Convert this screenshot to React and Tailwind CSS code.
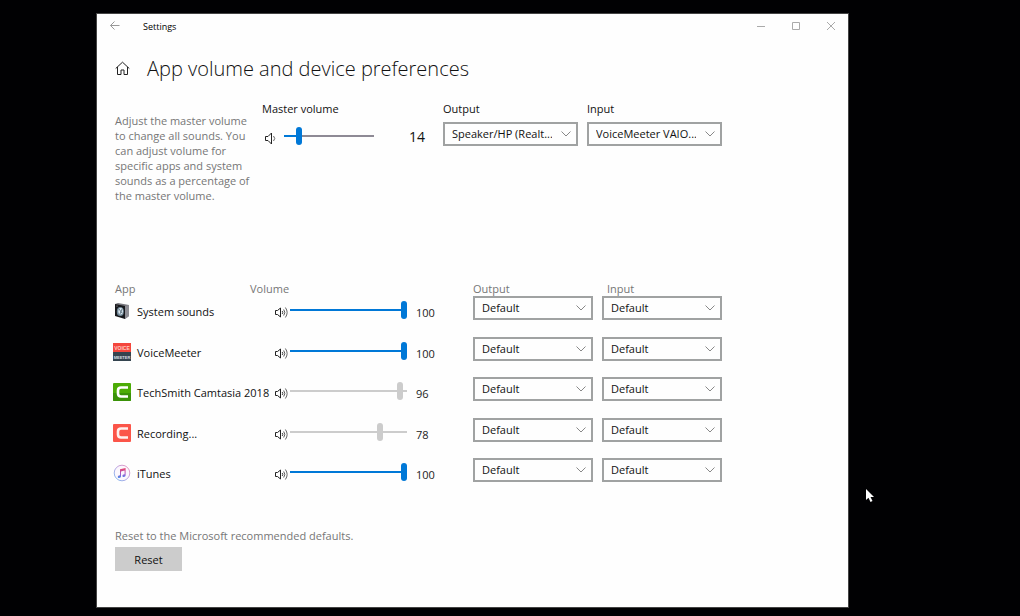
import { useState } from 'react'
import clsx from 'clsx'

const apps = [
  { id: 'system', name: 'System sounds', icon: SystemSoundsIcon, volume: 100, active: true },
  { id: 'voicemeeter', name: 'VoiceMeeter', icon: VoiceMeeterIcon, volume: 100, active: true },
  { id: 'camtasia', name: 'TechSmith Camtasia 2018', icon: CamtasiaIcon, volume: 96, active: false },
  { id: 'recording', name: 'Recording...', icon: RecordingIcon, volume: 78, active: false },
  { id: 'itunes', name: 'iTunes', icon: ITunesIcon, volume: 100, active: true },
]

function SystemSoundsIcon() {
  return (
    <svg width="18" height="18" viewBox="0 0 18 18" aria-hidden="true">
      <path d="M2 2 5 1l11 2v11l-4 3z" fill="#77777d" />
      <path d="m12 4 4-1v11l-4 3z" fill="#8d8d94" />
      <path d="m2 2 10 2v13L2 14z" fill="#17181c" />
      <ellipse cx="7.3" cy="9.5" rx="3.5" ry="4.6" fill="#6f8797" />
      <ellipse cx="7.6" cy="9.2" rx="2.3" ry="3.3" fill="#dce6ee" />
      <path d="m6 7 3 4M9 7l-2 5" stroke="#4e6472" strokeWidth="0.8" />
      <circle cx="4" cy="4" r="0.6" fill="#aaa" />
    </svg>
  )
}

function VoiceMeeterIcon() {
  return (
    <svg width="18" height="18" viewBox="0 0 18 18" aria-hidden="true">
      <path d="M0 0h18v9H0z" fill="#f4463c" />
      <path d="M0 9h18v9H0z" fill="#34444f" />
      <text x="9" y="6.5" textAnchor="middle" fontSize="5" fontWeight="700" fill="#ffc9c0" fontFamily="Liberation Sans, sans-serif">VOICE</text>
      <text x="9" y="15.5" textAnchor="middle" fontSize="4" fontWeight="700" fill="#d5dde2" fontFamily="Liberation Sans, sans-serif">MEETER</text>
    </svg>
  )
}

function CamtasiaIcon() {
  return (
    <svg width="18" height="18" viewBox="0 0 18 18" aria-hidden="true">
      <rect width="18" height="18" rx="1" fill="#4cab06" />
      <path d="M0 10h18v7a1 1 0 0 1-1 1H1a1 1 0 0 1-1-1z" fill="#3a9208" />
      <path d="M15 4.500H8Q5 4.500 5 7.500v3q0 3 3 3h7" fill="none" stroke="#fff" strokeWidth="2.6" />
    </svg>
  )
}

function RecordingIcon() {
  return (
    <svg width="18" height="18" viewBox="0 0 18 18" aria-hidden="true">
      <rect width="18" height="18" rx="1" fill="#fb5549" />
      <path d="M15 4.500H8Q5 4.500 5 7.500v3q0 3 3 3h7" fill="none" stroke="#fff0ed" strokeWidth="2.6" />
    </svg>
  )
}

function ITunesIcon() {
  return (
    <svg width="18" height="18" viewBox="0 0 18 18" aria-hidden="true">
      <defs>
        <linearGradient id="itunes-ring" x1="0" y1="1" x2="1" y2="0">
          <stop offset="0" stopColor="#6fb7ee" />
          <stop offset="0.5" stopColor="#b29be0" />
          <stop offset="1" stopColor="#ee8cb4" />
        </linearGradient>
        <linearGradient id="itunes-note" x1="0" y1="0" x2="0" y2="1">
          <stop offset="0" stopColor="#ee4468" />
          <stop offset="0.6" stopColor="#a558cf" />
          <stop offset="1" stopColor="#3f8fe8" />
        </linearGradient>
      </defs>
      <circle cx="9" cy="9" r="7.8" fill="#fbf7fd" stroke="url(#itunes-ring)" strokeWidth="0.9" />
      <path
        d="M7 5.2 12.6 4v7.3c0 1-.8 1.7-1.8 1.7s-1.4-.6-1.4-1.3c0-.8.7-1.3 2.2-1.5V6.6L8 7.4v4.9c0 1-.8 1.7-1.8 1.7s-1.4-.6-1.4-1.3c0-.8.7-1.3 2.2-1.5z"
        fill="url(#itunes-note)"
      />
    </svg>
  )
}

function SpeakerIcon({ waves = 2 }) {
  return (
    <svg width="13" height="13" viewBox="0 0 13 13" fill="none" stroke="#222" aria-hidden="true" className="shrink-0">
      {waves === 1 ? (
        <>
          <path d="M.5 4.500h2.500l3.500-3.500v11L3 8.500H.5z" />
          <path d="M8.500 4q2.500 2.500 0 5" stroke="#666" />
        </>
      ) : (
        <>
          <path d="M.5 4.500h2L5.500 2v9l-3-2.500h-2z" />
          <path d="M7.2 5q1.2 1.5 0 3" stroke="#444" />
          <path d="M8.7 3.5q2.2 3 0 6" stroke="#555" />
          <path d="M10.400 1.500q3.500 5 0 10" stroke="#666" />
        </>
      )}
    </svg>
  )
}

function Slider({ label, value, onChange, active = true, className, rest = '#cccccc' }) {
  const fill = active ? '#0078d7' : '#cccccc'
  return (
    <input
      type="range"
      aria-label={label}
      min="0"
      max="100"
      value={value}
      onChange={(e) => onChange(Number(e.target.value))}
      className={clsx(
        'h-[18px] appearance-none bg-[length:100%_2px] bg-center bg-no-repeat',
        '[&::-webkit-slider-thumb]:h-[18px] [&::-webkit-slider-thumb]:w-[6px] [&::-webkit-slider-thumb]:appearance-none [&::-webkit-slider-thumb]:rounded-full',
        active ? '[&::-webkit-slider-thumb]:bg-[#0078d7]' : '[&::-webkit-slider-thumb]:bg-[#cccccc]',
        className
      )}
      style={{ backgroundImage: `linear-gradient(to right, ${fill} ${value}%, ${rest} ${value}%)` }}
    />
  )
}

function Dropdown({ label, options }) {
  return (
    <div className="relative">
      <select
        aria-label={label}
        className="block h-6 w-full appearance-none border-2 border-[#a0a2a2] bg-[#fefefe] pr-6 pb-px pl-[7px] text-[11px] leading-4 text-[#111]"
      >
        {options.map((option) => (
          <option key={option}>{option}</option>
        ))}
      </select>
      <svg
        width="10"
        height="6"
        viewBox="0 0 10 6"
        fill="none"
        stroke="#888"
        aria-hidden="true"
        className="pointer-events-none absolute top-[9px] right-[7px]"
      >
        <path d="m.5.5 4.500 4.500L9.500.5" />
      </svg>
    </div>
  )
}

function TitleBar() {
  return (
    <header className="flex h-6 items-center justify-between px-3">
      <div className="flex items-center gap-[23px]">
        <button type="button" aria-label="Back">
          <svg width="11" height="10" viewBox="0 0 11 10" fill="none" stroke="#999" aria-hidden="true">
            <path d="M10.500 4.500H1.500M5.500.5l-4 4 4 4" />
          </svg>
        </button>
        <span className="text-[9px] text-black">Settings</span>
      </div>
      <div className="flex items-center gap-[25px]">
        <button type="button" aria-label="Minimize">
          <svg width="10" height="10" viewBox="0 0 10 10" fill="none" stroke="#aaa" aria-hidden="true">
            <path d="M1 5.500h8" />
          </svg>
        </button>
        <button type="button" aria-label="Maximize">
          <svg width="10" height="10" viewBox="0 0 10 10" fill="none" stroke="#aaa" aria-hidden="true">
            <path d="M1.500 1.500h7v7h-7z" />
          </svg>
        </button>
        <button type="button" aria-label="Close">
          <svg width="10" height="10" viewBox="0 0 10 10" fill="none" stroke="#aaa" aria-hidden="true">
            <path d="m1 1 8 8M9 1 1 9" />
          </svg>
        </button>
      </div>
    </header>
  )
}

function AppRow({ app }) {
  const [volume, setVolume] = useState(app.volume)
  const Icon = app.icon
  return (
    <tr className="align-top odd:h-[41px] even:h-10">
      <td colSpan="2">
        <div className="flex h-[30px] items-center gap-[6px] whitespace-nowrap text-[#111]">
          <Icon />
          {app.name}
        </div>
      </td>
      <td>
        <div className="flex h-7 items-center gap-[2px]">
          <span className="pt-1">
            <SpeakerIcon />
          </span>
          <Slider label={`${app.name} volume`} value={volume} onChange={setVolume} active={app.active} className="w-[117px]" />
        </div>
      </td>
      <td>
        <div className="flex h-8 items-center text-[#222]">{volume}</div>
      </td>
      <td className="pr-[9px]">
        <Dropdown label={`${app.name} output`} options={['Default']} />
      </td>
      <td>
        <Dropdown label={`${app.name} input`} options={['Default']} />
      </td>
    </tr>
  )
}

export default function App() {
  const [master, setMaster] = useState(14)

  return (
    <div className="relative flex min-h-screen bg-[#010103] pt-[13px] pr-[171px] pb-2 pl-24 font-['Open_Sans','Noto_Sans',sans-serif] text-[11px] leading-[15px]">
      <div className="flex-1 border border-[#444] bg-[#fefefe]">
        <TitleBar />

        <main className="px-4">
          <div className="flex h-[61px] items-center gap-[17px] pl-[2px]">
            <svg width="15" height="15" viewBox="0 0 15 15" fill="none" stroke="#222" aria-hidden="true">
              <path d="m.7 7.500 6.800-6.300 6.800 6.300M2.500 6v7.500h3.500V9h3v4.500h3.500V6" />
            </svg>
            <h1 className="text-[20px] leading-7 font-light text-[#111]">App volume and device preferences</h1>
          </div>

          <section className="flex h-[183px] items-start pl-[2px]">
            <p className="w-[147px] pt-[14px] pr-3 text-[#767676]">
              Adjust the master volume to change all sounds. You can adjust volume for specific apps and system sounds as a percentage of the master volume.
            </p>
            <div className="w-[181px] pt-[2px]">
              <h2 className="text-[#111]">Master volume</h2>
              <div className="flex h-10 items-center pl-[3px]">
                <span className="pt-1 pr-[6px]">
                  <SpeakerIcon waves={1} />
                </span>
                <Slider label="Master volume" value={master} onChange={setMaster} className="w-[90px]" rest="#8e8a95" />
                <span className="pl-[35px] text-[14px] text-[#111]">{master}</span>
              </div>
            </div>
            <div className="w-[144px] pt-[2px] pr-[9px]">
              <h2 className="pb-[6px] text-[#111]">Output</h2>
              <Dropdown label="Output" options={['Speaker/HP (Realt...']} />
            </div>
            <div className="w-[135px] pt-[2px]">
              <h2 className="pb-[6px] text-[#111]">Input</h2>
              <Dropdown label="Input" options={['VoiceMeeter VAIO...']} />
            </div>
          </section>

          <table className="w-[609px] table-fixed">
            <colgroup>
              <col className="w-[137px]" />
              <col className="w-[25px]" />
              <col className="w-[141px]" />
              <col className="w-[57px]" />
              <col className="w-[129px]" />
              <col className="w-[120px]" />
            </colgroup>
            <thead>
              <tr className="text-left leading-[14px] text-[#767676]">
                <th className="pl-[2px] font-normal">App</th>
                <th colSpan="3" className="font-normal">Volume</th>
                <th className="font-normal">Output</th>
                <th className="pl-[5px] font-normal">Input</th>
              </tr>
            </thead>
            <tbody>
              {apps.map((app) => (
                <AppRow key={app.id} app={app} />
              ))}
            </tbody>
          </table>

          <footer className="pt-[29px] pl-[2px]">
            <p className="pb-1 text-[#767676]">Reset to the Microsoft recommended defaults.</p>
            <button type="button" className="h-6 w-[67px] bg-[#cccccc] text-[#111]">
              Reset
            </button>
          </footer>
        </main>
      </div>

      {/* Mouse pointer over the desktop */}
      <svg width="10" height="14" viewBox="0 0 10 14" aria-hidden="true" className="absolute top-[489px] left-[866px]">
        <path d="M0 0v11l2.500-2.300L4.500 13l2-1-2-4H8z" fill="#fff" />
      </svg>
    </div>
  )
}
